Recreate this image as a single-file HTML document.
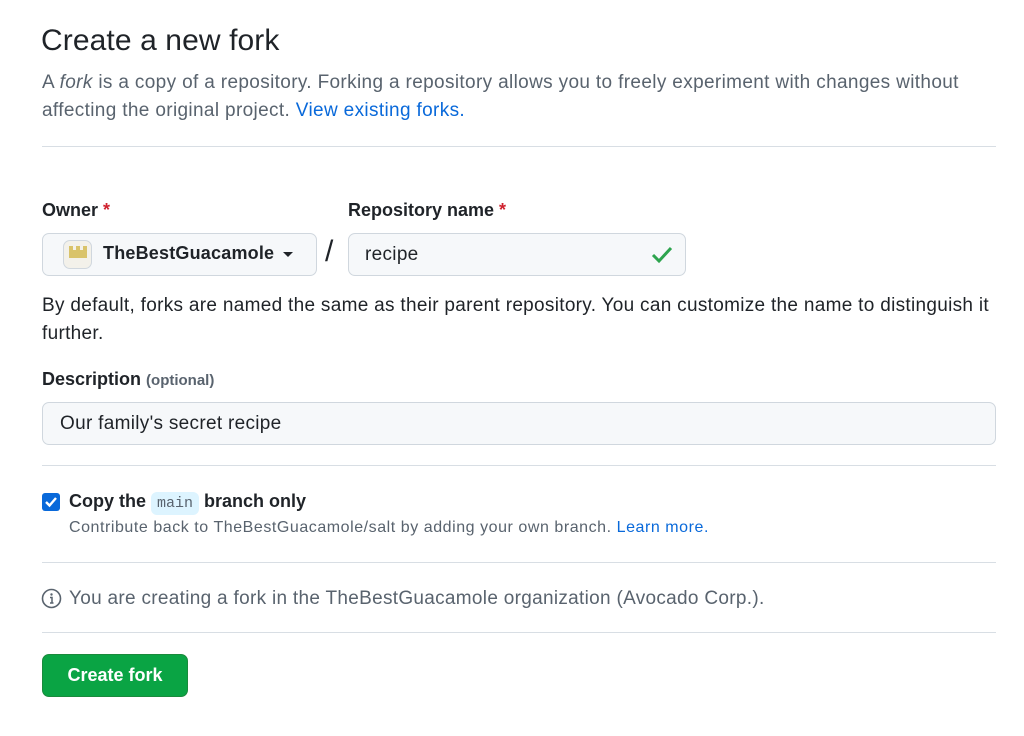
<!DOCTYPE html>
<html><head><style>
body{margin:0;background:#fff;font-family:"Liberation Sans",sans-serif;color:#1f2328;width:1024px;height:736px;position:relative;overflow:hidden}
.a{position:absolute;white-space:nowrap}
.r{font-size:19px;letter-spacing:0.3px}
.b{font-size:18px;font-weight:bold;letter-spacing:0}
.hr{position:absolute;left:42px;width:954px;height:1px;background:#d8dee4}
.box{position:absolute;background:#f6f8fa;border:1px solid #d0d7de;border-radius:7px;box-sizing:border-box}
.req{color:#cf222e}
</style></head><body>
<div class="a" style="left:41px;top:24px;font-size:30px;letter-spacing:0.1px">Create a new fork</div>
<div class="a r" style="left:42px;top:69px;line-height:28px;color:#59636e;letter-spacing:0.35px">A <i>fork</i> is a copy of a repository. Forking a repository allows you to freely experiment with changes without<br>affecting the original project. <span style="color:#0969da">View existing forks.</span></div>
<div class="hr" style="top:146px"></div>
<div class="a b" style="left:42px;top:200px">Owner <span class="req">*</span></div>
<div class="a b" style="left:348px;top:200px">Repository name <span class="req">*</span></div>
<div class="box" style="left:42px;top:233px;width:275px;height:43px"></div>
<div class="a" style="left:63px;top:240px;width:29px;height:29px;border:1px solid #d0d7de;border-radius:7px;background:#f3f1ea;box-sizing:border-box"></div>
<svg class="a" style="left:68px;top:245px" width="20" height="14" viewBox="0 0 20 14"><path d="M1 1h4v4h3V1h4v4h3V1h4v12H1z" fill="#d9c36a"/></svg>
<div class="a b" style="left:103px;top:243px;letter-spacing:0.2px">TheBestGuacamole</div>
<div class="a" style="left:283px;top:252px;width:0;height:0;border-left:5px solid transparent;border-right:5px solid transparent;border-top:5px solid #1f2328"></div>
<div class="a" style="left:325px;top:235px;font-size:30px">/</div>
<div class="box" style="left:348px;top:233px;width:338px;height:43px"></div>
<div class="a r" style="left:365px;top:244px">recipe</div>
<svg class="a" style="left:651px;top:245px" width="22" height="20" viewBox="0 0 22 20"><path d="M2 10l6 6L20 3" fill="none" stroke="#2da44e" stroke-width="3"/></svg>
<div class="a r" style="left:42px;top:292px;line-height:28px">By default, forks are named the same as their parent repository. You can customize the name to distinguish it<br>further.</div>
<div class="a b" style="left:42px;top:369px">Description <span style="font-size:15px;color:#59636e">(optional)</span></div>
<div class="box" style="left:42px;top:402px;width:954px;height:43px"></div>
<div class="a r" style="left:60px;top:413px">Our family's secret recipe</div>
<div class="hr" style="top:465px"></div>
<div class="a" style="left:42px;top:493px;width:18px;height:18px;background:#0969da;border-radius:3px"></div>
<svg class="a" style="left:42px;top:493px" width="18" height="18" viewBox="0 0 18 18"><path d="M4 9l3.5 3.5L14 5" fill="none" stroke="#fff" stroke-width="2.4"/></svg>
<div class="a b" style="left:69px;top:491px">Copy the <span style="font-family:'Liberation Mono',monospace;font-weight:normal;font-size:15px;background:#ddf4ff;color:#59636e;padding:3px 6px;border-radius:6px">main</span> branch only</div>
<div class="a" style="left:69px;top:519px;font-size:16px;letter-spacing:0.55px;color:#59636e">Contribute back to TheBestGuacamole/salt by adding your own branch. <span style="color:#0969da">Learn more.</span></div>
<div class="hr" style="top:562px"></div>
<svg class="a" style="left:41px;top:588px" width="21" height="21" viewBox="0 0 21 21"><circle cx="10.5" cy="10.5" r="9" fill="none" stroke="#59636e" stroke-width="1.6"/><circle cx="10.5" cy="6.5" r="1.2" fill="#59636e"/><path d="M9 9.5h2v5.5M9 15h3.5" fill="none" stroke="#59636e" stroke-width="1.5"/></svg>
<div class="a r" style="left:69px;top:588px;color:#59636e">You are creating a fork in the TheBestGuacamole organization (Avocado Corp.).</div>
<div class="hr" style="top:632px"></div>
<div class="a" style="left:42px;top:654px;width:146px;height:43px;background:#0aa444;border:1px solid #1a8a3c;border-radius:7px;box-sizing:border-box;color:#fff;font-size:18px;font-weight:bold;text-align:center;line-height:41px">Create fork</div>
</body></html>
